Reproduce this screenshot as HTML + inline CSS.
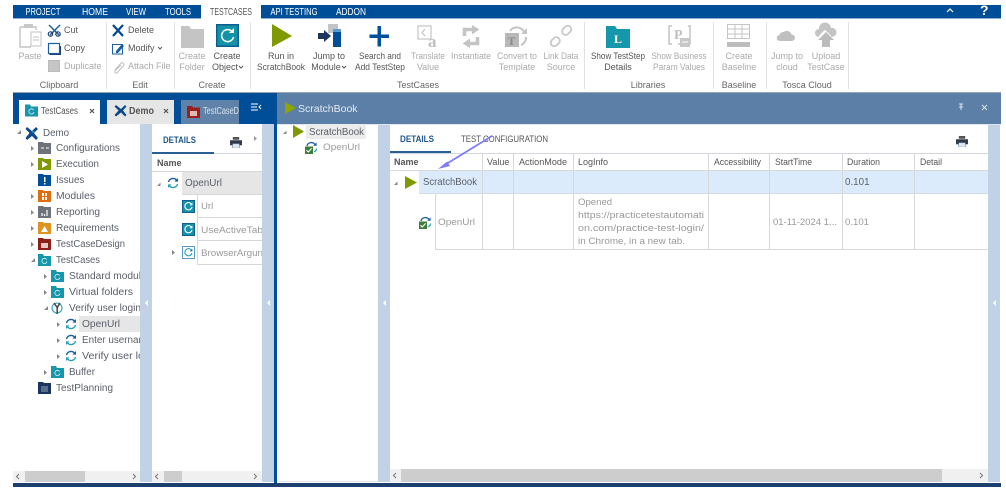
<!DOCTYPE html>
<html><head><meta charset="utf-8"><style>
html,body{margin:0;padding:0;background:#fff;width:1006px;height:490px;overflow:hidden}
svg{display:block;filter:blur(.35px)}
text{font-family:"Liberation Sans",sans-serif;font-size:9.5px;fill:#555}
.t{font-size:10px;fill:#fff;text-anchor:middle}
.a{font-size:9px;fill:#555;text-anchor:middle}
.d{font-size:9px;fill:#aaa;text-anchor:middle}
.g{font-size:9px;fill:#666;text-anchor:middle}
.s{font-size:9px;fill:#555}
.sd{font-size:9px;fill:#aaa}
.n{font-size:9.8px;fill:#5a5f68}
.h{font-size:9px;fill:#555}
.b{font-size:9px;font-weight:bold;fill:#555}
.tb{font-size:9.6px;font-weight:bold;fill:#22588f}
.m{font-size:9.6px;fill:#999}
</style></head><body>
<svg width="1006" height="490" viewBox="0 0 1006 490" xmlns="http://www.w3.org/2000/svg">
<defs>
<symbol id="r" viewBox="0 0 12 12"><path d="M1.5 5A4.6 4.6 0 0 1 9.6 3.2" fill="none" stroke="#1c5ea6" stroke-width="1.4"/><path d="M11 1v3.6H7.4z" fill="#1c5ea6"/><path d="M10.5 7A4.6 4.6 0 0 1 2.4 8.8" fill="none" stroke="#2a9fb6" stroke-width="1.4"/><path d="M1 11V7.4h3.6z" fill="#2a9fb6"/></symbol>
<symbol id="c" viewBox="0 0 13 13"><rect x=".5" y=".5" width="12" height="12" fill="#1493a8" stroke="#11608f"/><path d="M9.6 4.4A3.6 3.6 0 1 0 10 7" fill="none" stroke="#fff" stroke-width="1.1"/><path d="M10.4 2.6v2.8H7.6z" fill="#fff"/></symbol>
<symbol id="co" viewBox="0 0 13 13"><rect x=".5" y=".5" width="12" height="12" fill="#fff" stroke="#5b98c4"/><path d="M9.6 4.4A3.6 3.6 0 1 0 10 7" fill="none" stroke="#2a9fb6" stroke-width="1.1"/><path d="M10.4 2.6v2.8H7.6z" fill="#1c6ea6"/></symbol>
<symbol id="ft" viewBox="0 0 13 12"><path d="M0 0h5l1 2h7v10H0z" fill="#1797ab"/><path d="M8.7 5.6A2.6 2.6 0 1 0 9 7.4" fill="none" stroke="#d8f0f4" stroke-width=".8"/></symbol>
<symbol id="ok" viewBox="0 0 13 13"><path d="M2 5A4.4 4.4 0 0 1 10 3.6" fill="none" stroke="#1c5ea6" stroke-width="1.3"/><path d="M11.6 1.4v3.4H8.2z" fill="#1c5ea6"/><path d="M11.6 7.5A4 4 0 0 1 9 10.8" fill="none" stroke="#2a9fb6" stroke-width="1.2"/><rect x="0" y="5.5" width="8" height="7.5" fill="#3c7d3c"/><path d="M1.4 9.2l1.9 1.8L6.6 7.4" fill="none" stroke="#fff" stroke-width="1.1"/></symbol>
<symbol id="p" viewBox="0 0 13 12"><path d="M3 0h7v3H3z" fill="#555"/><path d="M0 3.5h13V9h-2.5v3h-8V9H0z" fill="#2f3a48"/><rect x="3" y="7.5" width="7" height="4.5" fill="#dfe8f2" stroke="#7fa6c9" stroke-width=".5"/></symbol>
<clipPath id="c1"><rect x="13" y="124" width="127" height="345"/></clipPath>
<clipPath id="c2"><rect x="152" y="172" width="110" height="100"/></clipPath>
</defs>

<!-- top tab bar -->
<rect x="13" y="5" width="988" height="13" fill="#004e98"/>
<rect x="13" y="18" width="988" height="1" fill="#8fb0d4"/>
<rect x="201" y="5" width="60" height="14" fill="#fff"/>
<text class="t" x="43" y="15" textLength="35" lengthAdjust="spacingAndGlyphs">PROJECT</text>
<text class="t" x="95" y="15" textLength="26" lengthAdjust="spacingAndGlyphs">HOME</text>
<text class="t" x="136" y="15" textLength="20" lengthAdjust="spacingAndGlyphs">VIEW</text>
<text class="t" x="178" y="15" textLength="26" lengthAdjust="spacingAndGlyphs">TOOLS</text>
<text class="t" x="231" y="15" textLength="42" lengthAdjust="spacingAndGlyphs" style="fill:#555">TESTCASES</text>
<text class="t" x="294" y="15" textLength="47" lengthAdjust="spacingAndGlyphs">API TESTING</text>
<text class="t" x="351" y="15" textLength="30" lengthAdjust="spacingAndGlyphs">ADDON</text>
<path d="M947 12l3-3 3 3" fill="none" stroke="#fff" stroke-width="1.2"/>
<text x="980" y="15" style="font-size:14px;font-weight:bold;fill:#fff">?</text>

<!-- ribbon -->
<rect x="13" y="19" width="988" height="73" fill="#fff"/>
<rect x="13" y="92" width="988" height="1" fill="#9aa5b1"/>
<g fill="#e2e2e2"><rect x="106" y="22" width="1" height="67"/><rect x="174" y="22" width="1" height="67"/><rect x="250" y="22" width="1" height="67"/><rect x="584" y="22" width="1" height="67"/><rect x="713" y="22" width="1" height="67"/><rect x="766" y="22" width="1" height="67"/><rect x="848" y="22" width="1" height="67"/></g>

<!-- clipboard -->
<path d="M20 27h16v3M20 27v20h11" fill="none" stroke="#c4c4c4" stroke-width="1.4"/><rect x="24" y="24" width="9" height="4" fill="#c8c8c8"/><rect x="31" y="32" width="10" height="14" fill="#fff" stroke="#c0c0c0"/><path d="M33 37h6M33 40h6" stroke="#c0c0c0"/>
<text class="d" x="30" y="59">Paste</text>
<path d="M49 25l10 10M60 25l-10 10" stroke="#1c5ea6" stroke-width="1.5"/><circle cx="50.5" cy="34" r="2.2" fill="none" stroke="#1c3f6e" stroke-width="1.2"/><circle cx="58" cy="34" r="2.2" fill="none" stroke="#1c3f6e" stroke-width="1.2"/>
<text class="s" x="64" y="33">Cut</text>
<rect x="48.5" y="43.5" width="11" height="10" fill="#fff" stroke="#1c5ea6" stroke-width="1.2"/><path d="M60.5 46v8.500h-11" fill="none" stroke="#1c3f6e"/>
<text class="s" x="64" y="51">Copy</text>
<rect x="48.5" y="60.5" width="11" height="11" fill="#c6c6c6" stroke="#bbb"/>
<text class="sd" x="64" y="69">Duplicate</text>
<text class="g" x="59" y="88">Clipboard</text>

<!-- edit -->
<path d="M113 25l10 11M123 25l-10 11" stroke="#00488f" stroke-width="2.2"/>
<text class="s" x="128" y="33">Delete</text>
<rect x="112.5" y="44.5" width="10" height="9.5" fill="#fff" stroke="#1c5ea6"/><path d="M116 51l6-7 2 2-6 7h-2z" fill="#1c5ea6"/>
<text class="s" x="128" y="51">Modify</text><path d="M158 47l2 2 2-2" fill="none" stroke="#555"/>
<path d="M115 70l6-7a2 2 0 0 1 3 2l-7 8a1.500 1.500 0 0 1-2-2l6-6" fill="none" stroke="#c2c2c2" stroke-width="1.1"/>
<text class="sd" x="128" y="69">Attach File</text>
<text class="g" x="140" y="88">Edit</text>

<!-- create -->
<path d="M181 26h8l2 3h13v19h-23z" fill="#c4c4c4"/>
<text class="d" x="192" y="59">Create</text><text class="d" x="192" y="70">Folder</text>
<rect x="216" y="24" width="23" height="23" fill="#0d5f92"/><rect x="217.500" y="25.500" width="20" height="20" fill="#1493a8"/>
<path d="M232 31.500A6 6 0 1 0 233.500 37" fill="none" stroke="#fff" stroke-width="1.5"/><path d="M234 28v5h-5z" fill="#fff"/>
<text class="a" x="227" y="59">Create</text><text class="a" x="225" y="70">Object</text><path d="M239 66l2 2 2-2" fill="none" stroke="#555"/>
<text class="g" x="212" y="88">Create</text>

<!-- testcases -->
<path d="M272 24l20 12-20 11z" fill="#7e9a00"/>
<text class="a" x="281" y="59">Run in</text><text class="a" x="281" y="70" textLength="48" lengthAdjust="spacingAndGlyphs">ScratchBook</text>
<path d="M318 33h6v-3l7 6-7 6v-3h-6z" fill="#1c3560"/><rect x="328" y="24" width="10" height="9" fill="#c2c4c8"/><path d="M333 29h8v3h-8z" fill="#5a9bd4"/><rect x="333" y="32" width="8" height="15" fill="#004e98"/>
<text class="a" x="329" y="59">Jump to</text><text class="a" x="326" y="70">Module</text><path d="M342 66l2 2 2-2" fill="none" stroke="#555"/>
<path d="M377.500 26h3.500v8.500h8v3.500h-8v8.500h-3.500v-8.500h-8v-3.500h8z" fill="#00509e"/>
<text class="a" x="380" y="59" textLength="42" lengthAdjust="spacingAndGlyphs">Search and</text><text class="a" x="380" y="70" textLength="50" lengthAdjust="spacingAndGlyphs">Add TestStep</text>
<rect x="418" y="26" width="13" height="13" fill="#fff" stroke="#c4c4c4" stroke-width="1.2"/><path d="M425 29l-3 3.500 3 3.500" fill="none" stroke="#c4c4c4" stroke-width="1.2"/>
<text x="428" y="47" style="font-size:17px;font-weight:bold;fill:#c0c0c0;font-family:'Liberation Serif',serif">a</text>
<text class="d" x="428" y="59" textLength="34" lengthAdjust="spacingAndGlyphs">Translate</text><text class="d" x="428" y="70">Value</text>
<path d="M464.500 36v-6.500h9M477.500 37v6.500h-9" fill="none" stroke="#c4c4c4" stroke-width="3.500"/><path d="M472 25l7.500 4.500-7.500 5zM470 38.500l-7.500 5 7.500 4.500z" fill="#c4c4c4"/>
<text class="d" x="471" y="59" textLength="40" lengthAdjust="spacingAndGlyphs">Instantiate</text>
<rect x="505" y="33" width="14" height="14" fill="#b8b8b8"/><text x="507.500" y="45" style="font-size:12px;font-weight:bold;fill:#8a8a8a;font-family:'Liberation Serif',serif">T</text>
<path d="M510 31a8 8 0 0 1 14 1M526 37a8 8 0 0 1-5 8" fill="none" stroke="#c4c4c4" stroke-width="2"/><path d="M527 28v6h-6z" fill="#c4c4c4"/>
<text class="d" x="517" y="59" textLength="40" lengthAdjust="spacingAndGlyphs">Convert to</text><text class="d" x="517" y="70">Template</text>
<g fill="none" stroke="#c8c8c8" stroke-width="1.8"><rect x="-6" y="-3.500" width="10" height="7" rx="3.500" transform="translate(556 41) rotate(-45)"/><rect x="-4" y="-3.500" width="10" height="7" rx="3.500" transform="translate(566 31) rotate(-45)"/></g>
<text class="d" x="561" y="59" textLength="35" lengthAdjust="spacingAndGlyphs">Link Data</text><text class="d" x="561" y="70">Source</text>
<text class="g" x="418" y="88">TestCases</text>

<!-- libraries -->
<path d="M606 26h9l2 3h13v19h-24z" fill="#1797ab"/><text x="614" y="43" style="font-size:12px;font-weight:bold;fill:#fff;font-family:'Liberation Serif',serif">L</text>
<text class="a" x="618" y="59" textLength="54" lengthAdjust="spacingAndGlyphs">Show TestStep</text><text class="a" x="618" y="70">Details</text>
<path d="M672 26h-3v18h3M688 26h2v18h-12" fill="none" stroke="#c4c4c4" stroke-width="1.5"/><text x="674" y="39" style="font-size:14px;font-weight:bold;fill:#c0c0c0;font-family:'Liberation Serif',serif">P</text><rect x="680" y="38" width="10" height="9" fill="#c8c8c8"/><path d="M688 42h-6" stroke="#fff"/>
<text class="d" x="679" y="59" textLength="55" lengthAdjust="spacingAndGlyphs">Show Business</text><text class="d" x="679" y="70" textLength="52" lengthAdjust="spacingAndGlyphs">Param Values</text>
<text class="g" x="648" y="88">Libraries</text>

<!-- baseline -->
<rect x="727.500" y="24.500" width="22" height="14" fill="#fff" stroke="#c4c4c4"/><path d="M727 29h23M727 34h23M735 24v14M742 24v14" stroke="#c4c4c4"/><rect x="727" y="42" width="23" height="5" fill="#bdbdbd"/>
<text class="d" x="739" y="59">Create</text><text class="d" x="739" y="70">Baseline</text>
<text class="g" x="739" y="88">Baseline</text>

<!-- cloud -->
<path d="M780 41a3 3 0 0 1-.5-6 4 4 0 0 1 4-3 5 5 0 0 1 8 2.500 3.300 3.300 0 0 1 3.500 3.200 3.300 3.300 0 0 1-3 3.300z" fill="#c0c0c0"/>
<text class="d" x="787" y="59">Jump to</text><text class="d" x="787" y="70">cloud</text>
<path d="M819 37a4 4 0 0 1 0-8 6 6 0 0 1 12-1 4.500 4.500 0 0 1 2 8.800h-2v-1l-6-6-6 6v1z" fill="#c4c4c4"/><path d="M826 32l8 8h-4v7h-8v-7h-4z" fill="#bcbcbc"/>
<text class="d" x="826" y="59">Upload</text><text class="d" x="826" y="70">TestCase</text>
<text class="g" x="807" y="88">Tosca Cloud</text>

<!-- panel bars -->
<rect x="13" y="93" width="264" height="31" fill="#004e98"/>
<rect x="19" y="100" width="81" height="24" fill="#fff"/>
<use href="#ft" x="25" y="104" width="13" height="13"/>
<text x="41" y="114" style="font-size:9.8px;fill:#555" textLength="37" lengthAdjust="spacingAndGlyphs">TestCases</text>
<path d="M90 109l4 4M94 109l-4 4" stroke="#555" stroke-width="1.2"/>
<rect x="107" y="100" width="67" height="24" fill="#e6e6e6"/>
<path d="M116 105l5 4 4-4 1.500 1.500-3.500 4 3.500 4.500-1.500 1.500-4-4-5 4-1.500-1.500 4-4.500-4-4z" fill="#0c4a8c"/>
<text x="129" y="114" style="font-size:9.8px;font-weight:bold;fill:#555" textLength="25" lengthAdjust="spacingAndGlyphs">Demo</text>
<path d="M164 109l4 4M168 109l-4 4" stroke="#555" stroke-width="1.2"/>
<rect x="181" y="100" width="58" height="24" fill="#6082a8"/>
<path d="M187 106h5l1 1.500h7V118h-13z" fill="#9a1f1f"/><path d="M190 111h7v5h-7z" fill="#e0b8b0"/>
<text x="203" y="114" style="font-size:9.8px;fill:#d6e0ec" textLength="36" lengthAdjust="spacingAndGlyphs">TestCaseD</text>
<path d="M251 104h7M251 107h6M251 110h7" stroke="#fff" stroke-width="1"/><path d="M261 105l-2 2 2 2" fill="none" stroke="#fff"/>
<rect x="277" y="93" width="724" height="31" fill="#5b7fa6"/>
<path d="M285 102l11 6-11 6z" fill="#8ea500"/>
<text x="298" y="112" style="font-size:10.5px;fill:#e4ebf3">ScratchBook</text>
<path d="M959 104h4M961 104v3M959 107h4M961 107v3" stroke="#dde6f0" stroke-width="1"/>
<path d="M982 105l5 5M987 105l-5 5" stroke="#dde6f0" stroke-width=".9"/>

<!-- main body -->
<rect x="13" y="124" width="988" height="359" fill="#fff"/>
<rect x="140" y="124" width="12" height="358" fill="#c1d2e6"/>
<rect x="262" y="124" width="12" height="358" fill="#c1d2e6"/>
<rect x="274" y="93" width="3" height="390" fill="#004e98"/>
<rect x="378" y="124" width="12" height="358" fill="#c1d2e6"/>
<rect x="988" y="124" width="12" height="358" fill="#c1d2e6"/>
<g fill="#fff"><path d="M148 300l-3 3 3 3z"/><path d="M270 300l-3 3 3 3z"/><path d="M386 300l-3 3 3 3z"/><path d="M996 300l-3 3 3 3z"/></g>
<rect x="277" y="124" width="724" height="1" fill="#dfe5ec"/>

<!-- left tree -->
<g clip-path="url(#c1)">
<g fill="#888"><path d="M17 134l4-4v4z"/><path d="M31 146l3 2.500-3 2.500z"/><path d="M31 162l3 2.500-3 2.500z"/><path d="M31 194l3 2.500-3 2.500z"/><path d="M31 210l3 2.500-3 2.500z"/><path d="M31 226l3 2.500-3 2.500z"/><path d="M31 242l3 2.500-3 2.500z"/><path d="M31 262l4-4v4z"/><path d="M44 274l3 2.500-3 2.500z"/><path d="M44 290l3 2.500-3 2.500z"/><path d="M44 310l4-4v4z"/><path d="M57 322l3 2.500-3 2.500z"/><path d="M57 338l3 2.500-3 2.500z"/><path d="M57 354l3 2.500-3 2.500z"/><path d="M44 370l3 2.500-3 2.500z"/></g>
<path d="M27 127l5 4 4-4 2 2-4 4 4 5-2 2-4-4-5 4-1.500-2 4-5-4-4z" fill="#0c4a8c"/><path d="M31 131l2 2 2-2" fill="#2a9fb6"/>
<text class="n" x="43" y="136">Demo</text>

<path d="M38 142h5l1 1h7v11H38z" fill="#6e737a"/><path d="M41 148h3M46 148h3" stroke="#fff"/>
<text class="n" x="56" y="151" textLength="64" lengthAdjust="spacingAndGlyphs">Configurations</text>
<path d="M38 158h5l1 1h7v11H38z" fill="#7e9a00"/><path d="M42 161l6 3.500-6 3.500z" fill="#fff"/>
<text class="n" x="56" y="167" textLength="43" lengthAdjust="spacingAndGlyphs">Execution</text>
<path d="M38 174h5l1 1h7v11H38z" fill="#004e98"/><rect x="44" y="177" width="1.500" height="5" fill="#fff"/><rect x="44" y="183" width="1.500" height="1.500" fill="#fff"/>
<text class="n" x="56" y="183">Issues</text>
<path d="M38 190h5l1 1h7v11H38z" fill="#e06d10"/><rect x="42" y="193" width="5" height="7" fill="#fff"/><path d="M44.500 193v7M42 196.500h5" stroke="#e06d10"/>
<text class="n" x="56" y="199" textLength="39" lengthAdjust="spacingAndGlyphs">Modules</text>
<path d="M38 206h5l1 1h7v11H38z" fill="#6e737a"/><path d="M42 216v-3M44.500 216v-2M47 216v-6" stroke="#fff" stroke-width="1.2"/>
<text class="n" x="56" y="215" textLength="44" lengthAdjust="spacingAndGlyphs">Reporting</text>
<path d="M38 222h5l1 1h7v11H38z" fill="#df9322"/><path d="M44.500 226l3.500 6h-7z" fill="#fff"/>
<text class="n" x="56" y="231" textLength="63" lengthAdjust="spacingAndGlyphs">Requirements</text>
<path d="M38 238h5l1 1h7v11H38z" fill="#8e1f17"/><rect x="41" y="243" width="7" height="5" fill="#e6c9c2"/>
<text class="n" x="56" y="247" textLength="69" lengthAdjust="spacingAndGlyphs">TestCaseDesign</text>
<use href="#ft" x="38" y="254" width="13" height="12"/>
<text class="n" x="56" y="263" textLength="44" lengthAdjust="spacingAndGlyphs">TestCases</text>
<use href="#ft" x="51" y="270" width="13" height="12"/>
<text class="n" x="69" y="279" textLength="72" lengthAdjust="spacingAndGlyphs">Standard modul</text>
<use href="#ft" x="51" y="286" width="13" height="12"/>
<text class="n" x="69" y="295" textLength="64" lengthAdjust="spacingAndGlyphs">Virtual folders</text>
<circle cx="57" cy="308" r="5" fill="none" stroke="#2a9fb6" stroke-width="1.1"/><path d="M54 303l3.200 4.500L60 303M57.200 307v7" fill="none" stroke="#444" stroke-width="1.5"/>
<text class="n" x="69" y="311" textLength="72" lengthAdjust="spacingAndGlyphs">Verify user login</text>
<rect x="79" y="316" width="61" height="16" fill="#e6e6e6"/>
<use href="#r" x="65" y="318" width="12" height="12"/>
<text class="n" x="82" y="327" textLength="38" lengthAdjust="spacingAndGlyphs">OpenUrl</text>
<use href="#r" x="65" y="334" width="12" height="12"/>
<text class="n" x="82" y="343" textLength="62" lengthAdjust="spacingAndGlyphs">Enter usernan</text>
<use href="#r" x="65" y="350" width="12" height="12"/>
<text class="n" x="82" y="359" textLength="62" lengthAdjust="spacingAndGlyphs">Verify user lo</text>
<use href="#ft" x="51" y="366" width="13" height="12"/>
<text class="n" x="69" y="375">Buffer</text>
<path d="M38 382h5l1 1h7v11H38z" fill="#1c3560"/><path d="M41 387h7M41 389h7M41 391h7" stroke="#bcc6d4" stroke-width=".7"/>
<text class="n" x="56" y="391" textLength="57" lengthAdjust="spacingAndGlyphs">TestPlanning</text>
</g>

<!-- middle pane -->
<text class="tb" x="163" y="143" textLength="33" lengthAdjust="spacingAndGlyphs">DETAILS</text>
<use href="#p" x="230" y="137" width="12" height="11"/>
<path d="M254 136l3 2.500-3 2.500z" fill="#999"/>
<rect x="152" y="153" width="110" height="1" fill="#d4d8de"/>
<rect x="152" y="152" width="62" height="2" fill="#2a5f96"/>
<text class="b" x="157" y="166">Name</text>
<rect x="152" y="171" width="110" height="1" fill="#d8d8d8"/>
<rect x="182" y="172" width="80" height="22" fill="#e6e6e6"/>
<rect x="182" y="194" width="80" height="1" fill="#d8d8d8"/>
<path d="M157 186l3.500-3.500v3.500z" fill="#888"/>
<use href="#r" x="167" y="177" width="12" height="12"/>
<text class="n" x="185" y="186" textLength="37" lengthAdjust="spacingAndGlyphs">OpenUrl</text>
<g clip-path="url(#c2)">
<rect x="197" y="195" width="1" height="69" fill="#d8d8d8"/>
<rect x="197" y="217" width="65" height="1" fill="#d8d8d8"/><rect x="197" y="240" width="65" height="1" fill="#d8d8d8"/><rect x="197" y="264" width="65" height="1" fill="#d8d8d8"/>
<use href="#c" x="182" y="200" width="13" height="13"/><text class="m" x="201" y="209">Url</text>
<use href="#c" x="182" y="223" width="13" height="13"/><text class="m" x="201" y="233" textLength="62" lengthAdjust="spacingAndGlyphs">UseActiveTab</text>
<path d="M172 250l3 2.500-3 2.500z" fill="#888"/>
<use href="#co" x="182" y="246" width="13" height="13"/><text class="m" x="201" y="256" textLength="62" lengthAdjust="spacingAndGlyphs">BrowserArgun</text>
</g>

<!-- scratch tree -->
<path d="M283 134l3.500-3.500v3.500z" fill="#888"/>
<path d="M293 125l11 6.500-11 6.500z" fill="#7e9a00"/>
<rect x="306" y="124" width="60" height="15" fill="#ececec"/>
<text class="n" x="309" y="135" textLength="55" lengthAdjust="spacingAndGlyphs">ScratchBook</text>
<use href="#ok" x="305" y="141" width="13" height="13"/>
<text class="m" x="323" y="150" textLength="37" lengthAdjust="spacingAndGlyphs">OpenUrl</text>

<!-- details right -->
<text class="tb" x="400" y="142" textLength="34" lengthAdjust="spacingAndGlyphs">DETAILS</text>
<text class="s" x="461" y="142" style="font-size:9.6px" textLength="87" lengthAdjust="spacingAndGlyphs">TEST CONFIGURATION</text>
<use href="#p" x="956" y="136" width="12" height="11"/>
<rect x="390" y="153" width="598" height="1" fill="#d4d8de"/>
<rect x="390" y="151" width="61" height="2" fill="#2a5f96"/>
<rect x="390" y="170" width="598" height="1" fill="#d8d8d8"/>
<rect x="419" y="171" width="569" height="22" fill="#dcebfb"/>
<rect x="419" y="193" width="569" height="1" fill="#d4dce4"/>
<rect x="435" y="249" width="553" height="1" fill="#d8d8d8"/>
<g fill="#d8d8d8">
<rect x="482" y="154" width="1" height="96"/><rect x="513" y="154" width="1" height="96"/><rect x="573" y="154" width="1" height="96"/><rect x="708" y="154" width="1" height="96"/><rect x="769" y="154" width="1" height="96"/><rect x="842" y="154" width="1" height="96"/><rect x="914" y="154" width="1" height="96"/><rect x="435" y="194" width="1" height="56"/>
</g>
<text class="b" x="394" y="165">Name</text>
<text class="h" x="487" y="165">Value</text>
<text class="h" x="519" y="165" textLength="48" lengthAdjust="spacingAndGlyphs">ActionMode</text>
<text class="h" x="578" y="165" textLength="30" lengthAdjust="spacingAndGlyphs">LogInfo</text>
<text class="h" x="714" y="165" textLength="47" lengthAdjust="spacingAndGlyphs">Accessibility</text>
<text class="h" x="775" y="165" textLength="37" lengthAdjust="spacingAndGlyphs">StartTime</text>
<text class="h" x="847" y="165" textLength="33" lengthAdjust="spacingAndGlyphs">Duration</text>
<text class="h" x="920" y="165" textLength="22" lengthAdjust="spacingAndGlyphs">Detail</text>
<path d="M394 185l3.500-3.500v3.500z" fill="#888"/>
<path d="M405 176l12 6.500-12 6.500z" fill="#7e9a00"/>
<text class="n" x="423" y="185" textLength="54" lengthAdjust="spacingAndGlyphs">ScratchBook</text>
<text class="n" x="845" y="185">0.101</text>
<use href="#ok" x="419" y="216" width="13" height="13"/>
<text class="m" x="438" y="225" textLength="37" lengthAdjust="spacingAndGlyphs">OpenUrl</text>
<text class="m" x="578" y="205">Opened</text>
<text class="m" x="578" y="218" textLength="126" lengthAdjust="spacingAndGlyphs">https://practicetestautomati</text>
<text class="m" x="578" y="231" textLength="126" lengthAdjust="spacingAndGlyphs">on.com/practice-test-login/</text>
<text class="m" x="578" y="244" textLength="107" lengthAdjust="spacingAndGlyphs">in Chrome, in a new tab.</text>
<text class="m" x="773" y="225" textLength="64" lengthAdjust="spacingAndGlyphs">01-11-2024 1...</text>
<text class="m" x="845" y="225">0.101</text>

<!-- annotation arrow -->
<path d="M492 136L443 166" stroke="#7d7df5" stroke-width="1.8" fill="none"/>
<path d="M438 169l9-7.500 3 4.500z" fill="#7d7df5"/>

<!-- scrollbars -->
<rect x="13" y="471" width="127" height="11" fill="#f0f0f0"/><rect x="25" y="471" width="60" height="11" fill="#cdcdcd"/>
<rect x="152" y="471" width="110" height="11" fill="#f0f0f0"/><rect x="164" y="471" width="18" height="11" fill="#cdcdcd"/>
<rect x="390" y="469" width="598" height="13" fill="#f0f0f0"/><rect x="401" y="469" width="541" height="13" fill="#cdcdcd"/>
<g fill="none" stroke="#777" stroke-width="1"><path d="M19 474l-2.500 2.500 2.500 2.500M133 474l2.500 2.500-2.500 2.500M158 474l-2.500 2.500 2.500 2.500M254 474l2.500 2.500-2.500 2.500M396 473l-2.500 2.500 2.500 2.500M980 473l2.500 2.500-2.500 2.500"/></g>
<rect x="279" y="481" width="99" height="1" fill="#e4e4e4"/>
<rect x="13" y="483" width="988" height="4" fill="#1c3f6e"/>
</svg>
</body></html>
